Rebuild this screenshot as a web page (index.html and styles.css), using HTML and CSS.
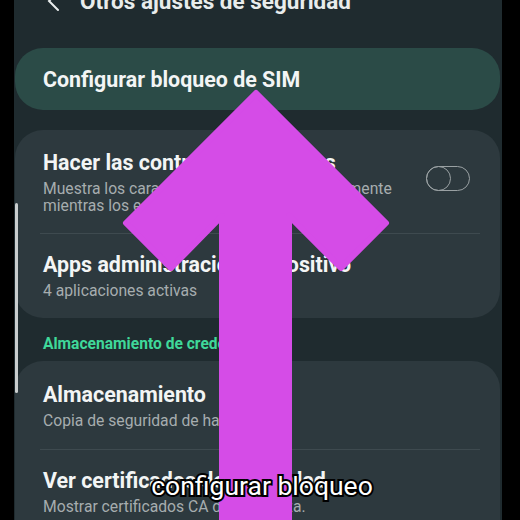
FILE: index.html
```html
<!DOCTYPE html>
<html lang="es">
<head>
    <meta charset="UTF-8">
    <meta name="viewport" content="width=device-width, initial-scale=1.0">
    <title>Otros ajustes de seguridad</title>
    <link rel="stylesheet" href="styles.css">
</head>
<body>
    <div class="screen">
        <div class="header">
            <svg class="back" width="14" height="20" viewBox="0 0 14 20">
                <path d="M11 0 L2 9 L11 18" fill="none" stroke="#e8ecec" stroke-width="2" stroke-linecap="round"/>
            </svg>
            <span class="header-title">Otros ajustes de seguridad</span>
        </div>

        <div class="card card-active">
            <span class="title">Configurar bloqueo de SIM</span>
        </div>

        <div class="card">
            <div class="item item-switch">
                <div class="item-text">
                    <div class="title">Hacer las contraseñas visibles</div>
                    <div class="sub">Muestra los caracteres de contraseña brevemente mientras los escribe.</div>
                </div>
                <div class="switch"><span class="thumb"></span></div>
            </div>
            <div class="divider"></div>
            <div class="item">
                <div class="title">Apps administración dispositivo</div>
                <div class="sub">4 aplicaciones activas</div>
            </div>
        </div>

        <div class="section">Almacenamiento de credenciales</div>

        <div class="card card-last">
            <div class="item">
                <div class="title">Almacenamiento</div>
                <div class="sub">Copia de seguridad de hardware</div>
            </div>
            <div class="divider"></div>
            <div class="item">
                <div class="title">Ver certificados de seguridad</div>
                <div class="sub">Mostrar certificados CA de confianza.</div>
            </div>
        </div>

        <div class="scrollbar"></div>
    </div>

    <!-- flecha superpuesta -->
    <svg class="arrow" width="520" height="520" viewBox="0 0 520 520">
        <polygon points="256,93 386,223 341,268 289,216 289,530 222,530 222,216 171,268 126,223"
                 fill="#d54ce7" stroke="#d54ce7" stroke-width="6" stroke-linejoin="round"/>
    </svg>

    <div class="caption">configurar bloqueo</div>
</body>
</html>
```

FILE: styles.css
```css
html, body {
    margin: 0;
    padding: 0;
    background: #000;
    width: 520px;
    height: 520px;
    overflow: hidden;
}
body {
    font-family: Roboto, "Noto Sans", Arial, sans-serif;
    position: relative;
}
.screen {
    position: relative;
    margin-left: 14px;
    width: 488px;
    height: 520px;
    background: #1f2b2f;
    overflow: hidden;
}
.header {
    height: 48px;
    display: flex;
    align-items: flex-start;
}
.back {
    margin: -8px 0 0 33px;
}
.header-title {
    margin: -12px 0 0 19px;
    font-size: 22.5px;
    line-height: 26px;
    font-weight: 700;
    color: #e8ecec;
}
.card {
    margin: 0 2px 0 1px;
    background: #2d393e;
    border-radius: 28px;
}
.card-active {
    height: 62px;
    display: flex;
    align-items: center;
    padding: 2px 0 0 28px;
    background: #2b4b47;
    margin-bottom: 20px;
    box-sizing: border-box;
}
.title {
    font-size: 21.4px;
    line-height: 26px;
    font-weight: 700;
    color: #f3f5f5;
    white-space: nowrap;
}
.sub {
    font-size: 15.7px;
    line-height: 17px;
    color: #a6adaf;
    margin-top: 4px;
}
.item {
    padding: 18px 30px 20px 28px;
}
.item:first-child {
    padding-top: 20px;
}
.item:last-child {
    padding-bottom: 19px;
}
.item-switch {
    display: flex;
    align-items: flex-start;
    gap: 14px;
    padding-bottom: 19px;
}
.item-text {
    flex: 1;
}
.switch {
    width: 44px;
    height: 25px;
    box-sizing: border-box;
    border: 1.5px solid #9aa1a3;
    border-radius: 13px;
    position: relative;
    flex-shrink: 0;
    margin-top: 16px;
}
.thumb {
    position: absolute;
    left: -1.5px;
    top: -1.5px;
    width: 25px;
    height: 25px;
    box-sizing: border-box;
    border: 1.5px solid #9aa1a3;
    border-radius: 50%;
}
.divider {
    height: 1px;
    background: #3e4a4f;
    margin: 0 20px 0 25px;
}
.section {
    margin: 16px 0 7px 29px;
    font-size: 15.6px;
    line-height: 20px;
    font-weight: 700;
    color: #3fd89a;
}
.card-last {
    border-radius: 28px 28px 0 0;
}
.card-last .item:first-child {
    padding-top: 21px;
}
.scrollbar {
    position: absolute;
    left: 1px;
    top: 203px;
    width: 3px;
    height: 190px;
    border-radius: 2px;
    background: #c9cdce;
}
.arrow {
    position: absolute;
    left: 0;
    top: 0;
}
.caption {
    position: absolute;
    left: 0;
    right: 0;
    top: 471px;
    padding-left: 4px;
    text-align: center;
    font-family: Roboto, Arial, sans-serif;
    font-size: 26.5px;
    line-height: 30px;
    color: #fff;
    -webkit-text-stroke: 4px #000;
    paint-order: stroke fill;
}
```
